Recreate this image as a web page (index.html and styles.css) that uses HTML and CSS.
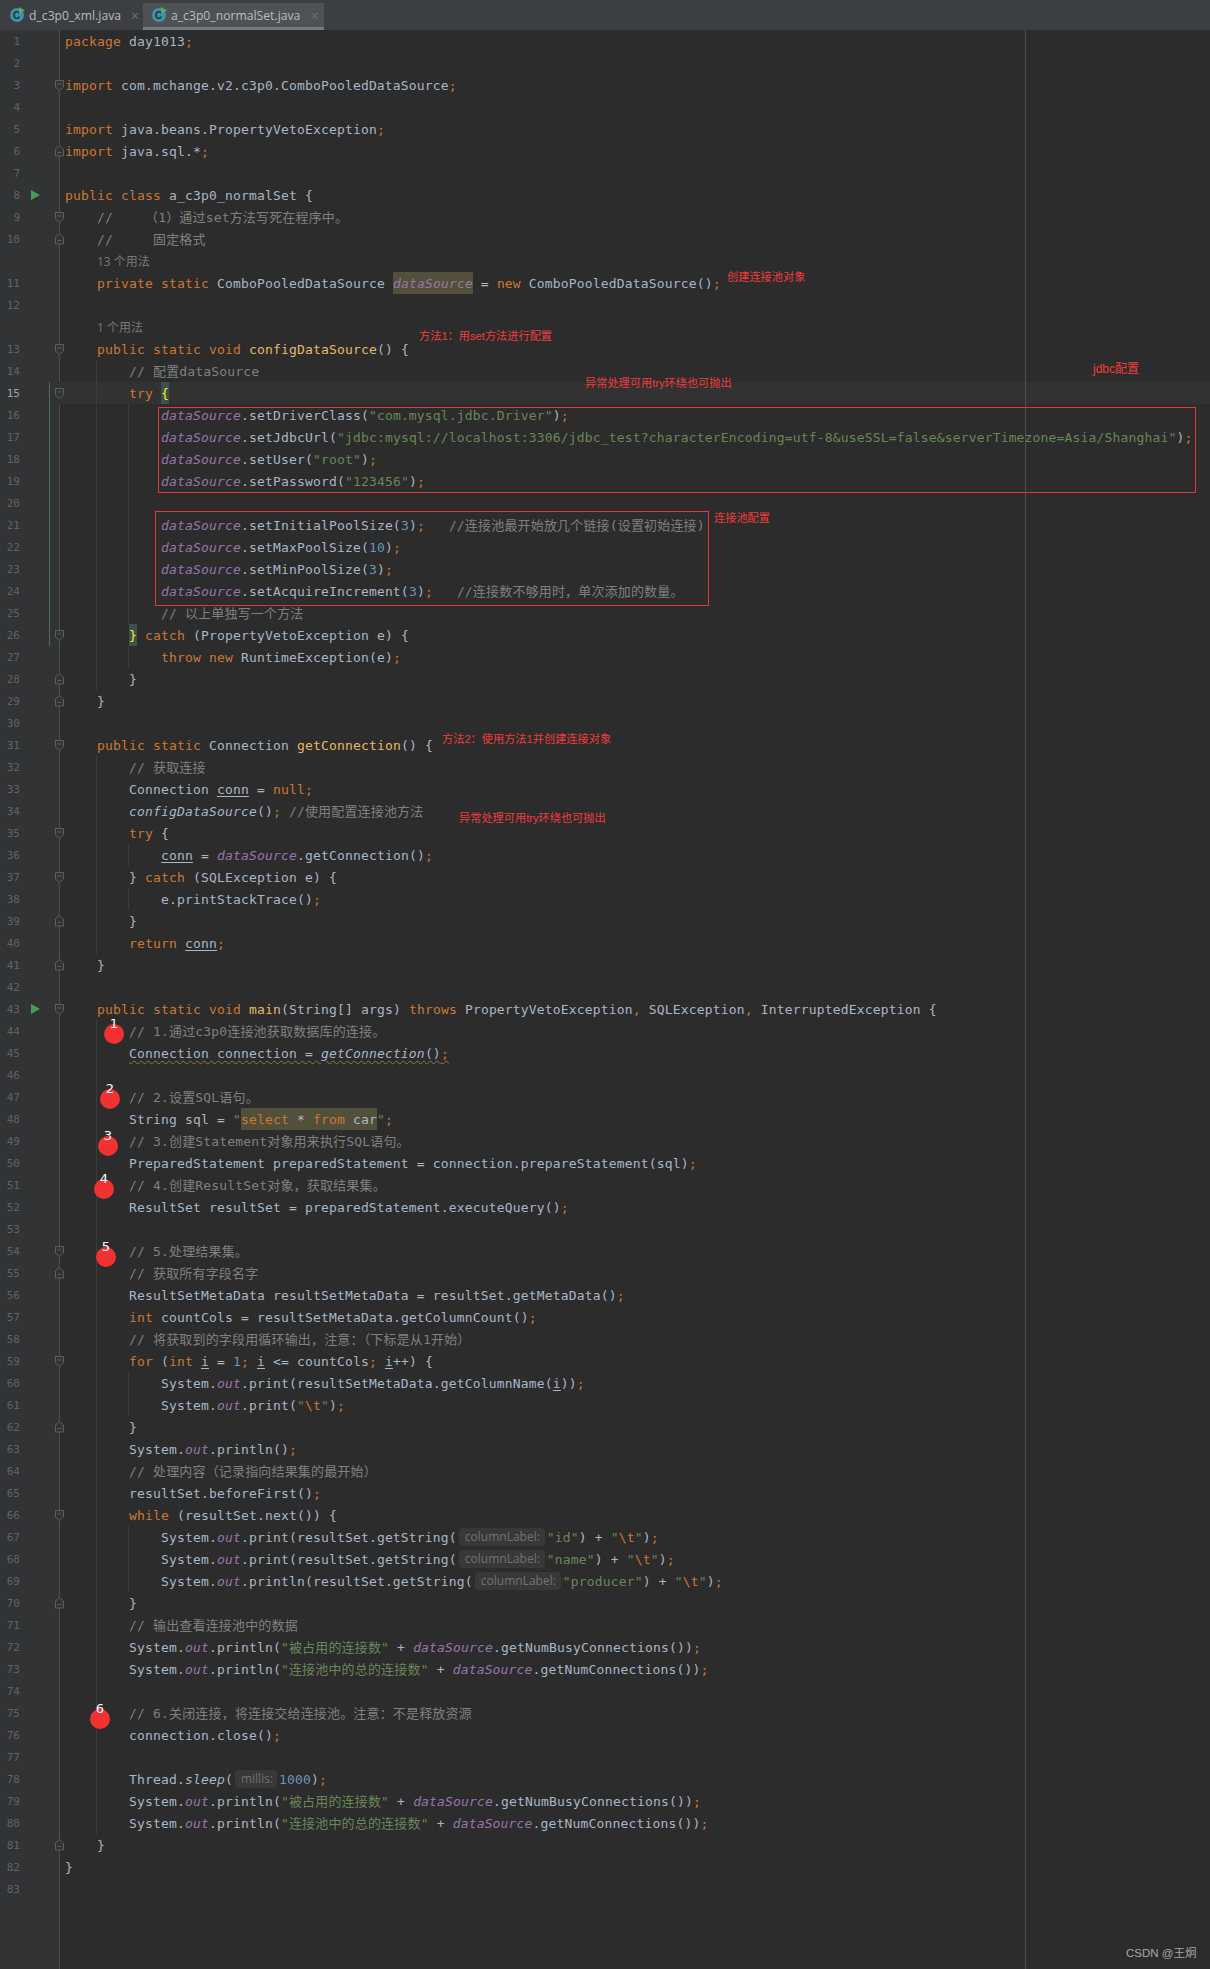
FILE: index.html
```html
<!DOCTYPE html>
<html lang="zh">
<head>
<meta charset="UTF-8" />
<title>a_c3p0_normalSet.java</title>
<link rel="stylesheet" href="styles.css">
</head>
<body>
<!-- 折叠标记 -->
<svg class="defs" width="0" height="0">
  <symbol id="fo" viewBox="0 0 10 12"><path d="M.5 1.5h8v6.5l-4 3.5-4-3.5zM2.5 5h4"/></symbol>
  <symbol id="fc" viewBox="0 0 10 12"><path d="M.5 11h8v-7l-4-3.5-4 3.5zM2.5 7.5h4"/></symbol>
</svg>

<!-- 标签栏 -->
<div class="tabs">
  <div class="tab">
    <svg class="ticon" width="16" height="16" viewBox="0 0 16 16"><circle cx="8" cy="8" r="7"/><text x="7.5" y="11.5">C</text><path class="tri" d="M10 0l6 3.5-6 3.5z"/></svg>
    <span>d_c3p0_xml.java</span><span class="x">×</span>
  </div>
  <div class="tab on">
    <svg class="ticon" width="16" height="16" viewBox="0 0 16 16"><circle cx="8" cy="8" r="7"/><text x="7.5" y="11.5">C</text><path class="tri" d="M10 0l6 3.5-6 3.5z"/></svg>
    <span>a_c3p0_normalSet.java</span><span class="x">×</span>
  </div>
</div>

<!-- 代码区 -->
<div class="editor">
  <div class="row"><div class="gut"><span class="num">1</span></div><pre class="code"><span class="k">package</span> day1013<span class="k">;</span></pre></div>
  <div class="row"><div class="gut"><span class="num">2</span></div><pre class="code"></pre></div>
  <div class="row"><div class="gut"><span class="num">3</span><svg class="fold"><use href="#fo"/></svg></div><pre class="code"><span class="k">import</span> com.mchange.v2.c3p0.ComboPooledDataSource<span class="k">;</span></pre></div>
  <div class="row"><div class="gut"><span class="num">4</span></div><pre class="code"></pre></div>
  <div class="row"><div class="gut"><span class="num">5</span></div><pre class="code"><span class="k">import</span> java.beans.PropertyVetoException<span class="k">;</span></pre></div>
  <div class="row"><div class="gut"><span class="num">6</span><svg class="fold"><use href="#fc"/></svg></div><pre class="code"><span class="k">import</span> java.sql.*<span class="k">;</span></pre></div>
  <div class="row"><div class="gut"><span class="num">7</span></div><pre class="code"></pre></div>
  <div class="row"><div class="gut"><span class="num">8</span><svg class="run" width="9" height="10" viewBox="0 0 9 10"><path d="M0 0l9 5-9 5z"/></svg></div><pre class="code"><span class="k">public class</span> a_c3p0_normalSet {</pre></div>
  <div class="row"><div class="gut"><span class="num">9</span><svg class="fold"><use href="#fo"/></svg></div><pre class="code"><span class="c">    //    （1）通过set方法写死在程序中。</span></pre></div>
  <div class="row"><div class="gut"><span class="num">10</span><svg class="fold"><use href="#fc"/></svg></div><pre class="code"><span class="c">    //     固定格式</span></pre></div>
  <div class="row"><div class="gut"></div><div class="code use">13 个用法</div></div>
  <div class="row"><div class="gut"><span class="num">11</span></div><pre class="code">    <span class="k">private static</span> ComboPooledDataSource <span class="f mark">dataSource</span> = <span class="k">new</span> ComboPooledDataSource()<span class="k">;</span></pre></div>
  <div class="row"><div class="gut"><span class="num">12</span></div><pre class="code"></pre></div>
  <div class="row"><div class="gut"></div><div class="code use">1 个用法</div></div>
  <div class="row"><div class="gut"><span class="num">13</span><svg class="fold"><use href="#fo"/></svg></div><pre class="code">    <span class="k">public static void</span> <span class="m">configDataSource</span>() {</pre></div>
  <div class="row g1"><div class="gut"><span class="num">14</span></div><pre class="code"><span class="c">        // 配置dataSource</span></pre></div>
  <div class="row g1 cur chg"><div class="gut"><span class="num">15</span><svg class="fold"><use href="#fo"/></svg></div><pre class="code">        <span class="k">try</span> <span class="brace">{</span></pre></div>
  <div class="row g2 chg"><div class="gut"><span class="num">16</span></div><pre class="code">            <span class="f">dataSource</span>.setDriverClass(<span class="s">"com.mysql.jdbc.Driver"</span>)<span class="k">;</span></pre></div>
  <div class="row g2 chg"><div class="gut"><span class="num">17</span></div><pre class="code">            <span class="f">dataSource</span>.setJdbcUrl(<span class="s">"jdbc:mysql://localhost:3306/jdbc_test?characterEncoding=utf-8&amp;useSSL=false&amp;serverTimezone=Asia/Shanghai"</span>)<span class="k">;</span></pre></div>
  <div class="row g2 chg"><div class="gut"><span class="num">18</span></div><pre class="code">            <span class="f">dataSource</span>.setUser(<span class="s">"root"</span>)<span class="k">;</span></pre></div>
  <div class="row g2 chg"><div class="gut"><span class="num">19</span></div><pre class="code">            <span class="f">dataSource</span>.setPassword(<span class="s">"123456"</span>)<span class="k">;</span></pre></div>
  <div class="row g2 chg"><div class="gut"><span class="num">20</span></div><pre class="code"></pre></div>
  <div class="row g2 chg"><div class="gut"><span class="num">21</span></div><pre class="code">            <span class="f">dataSource</span>.setInitialPoolSize(<span class="n">3</span>)<span class="k">;</span>   <span class="c">//连接池最开始放几个链接(设置初始连接)</span></pre></div>
  <div class="row g2 chg"><div class="gut"><span class="num">22</span></div><pre class="code">            <span class="f">dataSource</span>.setMaxPoolSize(<span class="n">10</span>)<span class="k">;</span></pre></div>
  <div class="row g2 chg"><div class="gut"><span class="num">23</span></div><pre class="code">            <span class="f">dataSource</span>.setMinPoolSize(<span class="n">3</span>)<span class="k">;</span></pre></div>
  <div class="row g2 chg"><div class="gut"><span class="num">24</span></div><pre class="code">            <span class="f">dataSource</span>.setAcquireIncrement(<span class="n">3</span>)<span class="k">;</span>   <span class="c">//连接数不够用时，单次添加的数量。</span></pre></div>
  <div class="row g2 chg"><div class="gut"><span class="num">25</span></div><pre class="code"><span class="c">            // 以上单独写一个方法</span></pre></div>
  <div class="row g1 chg"><div class="gut"><span class="num">26</span><svg class="fold"><use href="#fo"/></svg></div><pre class="code">        <span class="brace">}</span> <span class="k">catch</span> (PropertyVetoException e) {</pre></div>
  <div class="row g2"><div class="gut"><span class="num">27</span></div><pre class="code">            <span class="k">throw new</span> RuntimeException(e)<span class="k">;</span></pre></div>
  <div class="row g1"><div class="gut"><span class="num">28</span><svg class="fold"><use href="#fc"/></svg></div><pre class="code">        }</pre></div>
  <div class="row"><div class="gut"><span class="num">29</span><svg class="fold"><use href="#fc"/></svg></div><pre class="code">    }</pre></div>
  <div class="row"><div class="gut"><span class="num">30</span></div><pre class="code"></pre></div>
  <div class="row"><div class="gut"><span class="num">31</span><svg class="fold"><use href="#fo"/></svg></div><pre class="code">    <span class="k">public static</span> Connection <span class="m">getConnection</span>() {</pre></div>
  <div class="row g1"><div class="gut"><span class="num">32</span></div><pre class="code"><span class="c">        // 获取连接</span></pre></div>
  <div class="row g1"><div class="gut"><span class="num">33</span></div><pre class="code">        Connection <span class="u">conn</span> = <span class="k">null;</span></pre></div>
  <div class="row g1"><div class="gut"><span class="num">34</span></div><pre class="code">        <span class="i">configDataSource</span>()<span class="k">;</span> <span class="c">//使用配置连接池方法</span></pre></div>
  <div class="row g1"><div class="gut"><span class="num">35</span><svg class="fold"><use href="#fo"/></svg></div><pre class="code">        <span class="k">try</span> {</pre></div>
  <div class="row g2"><div class="gut"><span class="num">36</span></div><pre class="code">            <span class="u">conn</span> = <span class="f">dataSource</span>.getConnection()<span class="k">;</span></pre></div>
  <div class="row g1"><div class="gut"><span class="num">37</span><svg class="fold"><use href="#fo"/></svg></div><pre class="code">        } <span class="k">catch</span> (SQLException e) {</pre></div>
  <div class="row g2"><div class="gut"><span class="num">38</span></div><pre class="code">            e.printStackTrace()<span class="k">;</span></pre></div>
  <div class="row g1"><div class="gut"><span class="num">39</span><svg class="fold"><use href="#fc"/></svg></div><pre class="code">        }</pre></div>
  <div class="row g1"><div class="gut"><span class="num">40</span></div><pre class="code">        <span class="k">return</span> <span class="u">conn</span><span class="k">;</span></pre></div>
  <div class="row"><div class="gut"><span class="num">41</span><svg class="fold"><use href="#fc"/></svg></div><pre class="code">    }</pre></div>
  <div class="row"><div class="gut"><span class="num">42</span></div><pre class="code"></pre></div>
  <div class="row"><div class="gut"><span class="num">43</span><svg class="run" width="9" height="10" viewBox="0 0 9 10"><path d="M0 0l9 5-9 5z"/></svg><svg class="fold"><use href="#fo"/></svg></div><pre class="code">    <span class="k">public static void</span> <span class="m">main</span>(String[] args) <span class="k">throws</span> PropertyVetoException<span class="k">,</span> SQLException<span class="k">,</span> InterruptedException {</pre></div>
  <div class="row g1"><div class="gut"><span class="num">44</span></div><pre class="code"><span class="c">        // 1.通过c3p0连接池获取数据库的连接。</span></pre></div>
  <div class="row g1"><div class="gut"><span class="num">45</span></div><pre class="code">        <span class="warn">Connection connection = <span class="i">getConnection</span>()<span class="k">;</span></span></pre></div>
  <div class="row g1"><div class="gut"><span class="num">46</span></div><pre class="code"></pre></div>
  <div class="row g1"><div class="gut"><span class="num">47</span></div><pre class="code"><span class="c">        // 2.设置SQL语句。</span></pre></div>
  <div class="row g1"><div class="gut"><span class="num">48</span></div><pre class="code">        String sql = <span class="s">"</span><span class="mark"><span class="k">select</span> * <span class="k">from</span> car</span><span class="s">"</span><span class="k">;</span></pre></div>
  <div class="row g1"><div class="gut"><span class="num">49</span></div><pre class="code"><span class="c">        // 3.创建Statement对象用来执行SQL语句。</span></pre></div>
  <div class="row g1"><div class="gut"><span class="num">50</span></div><pre class="code">        PreparedStatement preparedStatement = connection.prepareStatement(sql)<span class="k">;</span></pre></div>
  <div class="row g1"><div class="gut"><span class="num">51</span></div><pre class="code"><span class="c">        // 4.创建ResultSet对象，获取结果集。</span></pre></div>
  <div class="row g1"><div class="gut"><span class="num">52</span></div><pre class="code">        ResultSet resultSet = preparedStatement.executeQuery()<span class="k">;</span></pre></div>
  <div class="row g1"><div class="gut"><span class="num">53</span></div><pre class="code"></pre></div>
  <div class="row g1"><div class="gut"><span class="num">54</span><svg class="fold"><use href="#fo"/></svg></div><pre class="code"><span class="c">        // 5.处理结果集。</span></pre></div>
  <div class="row g1"><div class="gut"><span class="num">55</span><svg class="fold"><use href="#fc"/></svg></div><pre class="code"><span class="c">        // 获取所有字段名字</span></pre></div>
  <div class="row g1"><div class="gut"><span class="num">56</span></div><pre class="code">        ResultSetMetaData resultSetMetaData = resultSet.getMetaData()<span class="k">;</span></pre></div>
  <div class="row g1"><div class="gut"><span class="num">57</span></div><pre class="code">        <span class="k">int</span> countCols = resultSetMetaData.getColumnCount()<span class="k">;</span></pre></div>
  <div class="row g1"><div class="gut"><span class="num">58</span></div><pre class="code"><span class="c">        // 将获取到的字段用循环输出，注意：（下标是从1开始）</span></pre></div>
  <div class="row g1"><div class="gut"><span class="num">59</span><svg class="fold"><use href="#fo"/></svg></div><pre class="code">        <span class="k">for</span> (<span class="k">int</span> <span class="u">i</span> = <span class="n">1</span><span class="k">;</span> <span class="u">i</span> &lt;= countCols<span class="k">;</span> <span class="u">i</span>++) {</pre></div>
  <div class="row g2"><div class="gut"><span class="num">60</span></div><pre class="code">            System.<span class="f">out</span>.print(resultSetMetaData.getColumnName(<span class="u">i</span>))<span class="k">;</span></pre></div>
  <div class="row g2"><div class="gut"><span class="num">61</span></div><pre class="code">            System.<span class="f">out</span>.print(<span class="s">"<span class="k">\t</span>"</span>)<span class="k">;</span></pre></div>
  <div class="row g1"><div class="gut"><span class="num">62</span><svg class="fold"><use href="#fc"/></svg></div><pre class="code">        }</pre></div>
  <div class="row g1"><div class="gut"><span class="num">63</span></div><pre class="code">        System.<span class="f">out</span>.println()<span class="k">;</span></pre></div>
  <div class="row g1"><div class="gut"><span class="num">64</span></div><pre class="code"><span class="c">        // 处理内容（记录指向结果集的最开始）</span></pre></div>
  <div class="row g1"><div class="gut"><span class="num">65</span></div><pre class="code">        resultSet.beforeFirst()<span class="k">;</span></pre></div>
  <div class="row g1"><div class="gut"><span class="num">66</span><svg class="fold"><use href="#fo"/></svg></div><pre class="code">        <span class="k">while</span> (resultSet.next()) {</pre></div>
  <div class="row g2"><div class="gut"><span class="num">67</span></div><pre class="code">            System.<span class="f">out</span>.print(resultSet.getString(<span class="hint">columnLabel:</span><span class="s">"id"</span>) + <span class="s">"<span class="k">\t</span>"</span>)<span class="k">;</span></pre></div>
  <div class="row g2"><div class="gut"><span class="num">68</span></div><pre class="code">            System.<span class="f">out</span>.print(resultSet.getString(<span class="hint">columnLabel:</span><span class="s">"name"</span>) + <span class="s">"<span class="k">\t</span>"</span>)<span class="k">;</span></pre></div>
  <div class="row g2"><div class="gut"><span class="num">69</span></div><pre class="code">            System.<span class="f">out</span>.println(resultSet.getString(<span class="hint">columnLabel:</span><span class="s">"producer"</span>) + <span class="s">"<span class="k">\t</span>"</span>)<span class="k">;</span></pre></div>
  <div class="row g1"><div class="gut"><span class="num">70</span><svg class="fold"><use href="#fc"/></svg></div><pre class="code">        }</pre></div>
  <div class="row g1"><div class="gut"><span class="num">71</span></div><pre class="code"><span class="c">        // 输出查看连接池中的数据</span></pre></div>
  <div class="row g1"><div class="gut"><span class="num">72</span></div><pre class="code">        System.<span class="f">out</span>.println(<span class="s">"被占用的连接数"</span> + <span class="f">dataSource</span>.getNumBusyConnections())<span class="k">;</span></pre></div>
  <div class="row g1"><div class="gut"><span class="num">73</span></div><pre class="code">        System.<span class="f">out</span>.println(<span class="s">"连接池中的总的连接数"</span> + <span class="f">dataSource</span>.getNumConnections())<span class="k">;</span></pre></div>
  <div class="row g1"><div class="gut"><span class="num">74</span></div><pre class="code"></pre></div>
  <div class="row g1"><div class="gut"><span class="num">75</span></div><pre class="code"><span class="c">        // 6.关闭连接，将连接交给连接池。注意：不是释放资源</span></pre></div>
  <div class="row g1"><div class="gut"><span class="num">76</span></div><pre class="code">        connection.close()<span class="k">;</span></pre></div>
  <div class="row g1"><div class="gut"><span class="num">77</span></div><pre class="code"></pre></div>
  <div class="row g1"><div class="gut"><span class="num">78</span></div><pre class="code">        Thread.<span class="i">sleep</span>(<span class="hint short">millis:</span><span class="n">1000</span>)<span class="k">;</span></pre></div>
  <div class="row g1"><div class="gut"><span class="num">79</span></div><pre class="code">        System.<span class="f">out</span>.println(<span class="s">"被占用的连接数"</span> + <span class="f">dataSource</span>.getNumBusyConnections())<span class="k">;</span></pre></div>
  <div class="row g1"><div class="gut"><span class="num">80</span></div><pre class="code">        System.<span class="f">out</span>.println(<span class="s">"连接池中的总的连接数"</span> + <span class="f">dataSource</span>.getNumConnections())<span class="k">;</span></pre></div>
  <div class="row"><div class="gut"><span class="num">81</span><svg class="fold"><use href="#fc"/></svg></div><pre class="code">    }</pre></div>
  <div class="row"><div class="gut"><span class="num">82</span></div><pre class="code">}</pre></div>
  <div class="row"><div class="gut"><span class="num">83</span></div><pre class="code"></pre></div>

  <!-- 右边界线 -->
  <div class="margin-line"></div>
</div>

<!-- 截图上的标注 -->
<div class="box box-jdbc"></div>
<div class="box box-pool"></div>

<div class="note n-create">创建连接池对象</div>
<div class="note n-way1">方法1：用set方法进行配置</div>
<div class="note n-jdbc">jdbc配置</div>
<div class="note n-try1">异常处理可用try环绕也可抛出</div>
<div class="note n-pool">连接池配置</div>
<div class="note n-way2">方法2：使用方法1并创建连接对象</div>
<div class="note n-try2">异常处理可用try环绕也可抛出</div>

<div class="dot d1"><span>1</span></div>
<div class="dot d2"><span>2</span></div>
<div class="dot d3"><span>3</span></div>
<div class="dot d4"><span>4</span></div>
<div class="dot d5"><span>5</span></div>
<div class="dot d6"><span>6</span></div>

<div class="wm">CSDN @王炯</div>
</body>
</html>
```

FILE: styles.css
```css
* {
  box-sizing: border-box;
}
body {
  margin: 0;
  position: relative;
  min-height: 1969px;
  background: #2c2c2c;
  overflow: hidden;
}
.defs {
  position: absolute;
}

/* 标签栏 */
.tabs {
  display: flex;
  height: 30px;
  padding-top: 3px;
  background: #3c3f41;
  font: 12.2px "Open Sans", "Noto Sans", sans-serif;
  color: #bbbbbb;
}
.tab {
  display: flex;
  align-items: center;
  gap: 4px;
  width: 143px;
  padding: 0 0 3px 9px;
}
.tab.on {
  width: 181px;
  background: #4e5254;
  border-bottom: 3px solid #747a80;
  padding: 0 0 0 8px;
}
.x {
  margin-left: 6px;
  font-size: 14px;
  color: #6e6e6e;
}
.ticon circle {
  fill: #3f8fae;
}
.ticon text {
  font: bold 10px "Liberation Sans", sans-serif;
  text-anchor: middle;
  fill: #2b2b2b;
}
.ticon .tri {
  fill: #59a869;
}

/* 编辑区背景: 行号栏 + 分隔线 */
.editor {
  position: relative;
  height: 1939px;
  background:
    linear-gradient(#4b4d4e, #4b4d4e) 59px 0 / 1px 100% no-repeat,
    linear-gradient(#313335, #313335) 0 0 / 59px 100% no-repeat,
    #2c2c2c;
}
.row {
  display: flex;
  height: 22px;
}
.gut {
  display: flex;
  align-items: center;
  flex: none;
  width: 59px;
  font: 11px "DejaVu Sans Mono", monospace;
  color: #606366;
}
.num {
  width: 20px;
  text-align: right;
}
.run {
  margin-left: 11px;
  fill: #499c54;
}
.fold {
  width: 10px;
  height: 12px;
  margin-left: auto;
  margin-right: -6px;
  position: relative;
  z-index: 1;
  fill: #313335;
  stroke: #5c5e60;
  stroke-width: 1;
}
.code {
  flex: 1;
  min-width: 0;
  height: 22px;
  margin: 0;
  padding-left: 6px;
  font: 13px/24px "DejaVu Sans Mono", "Noto Sans CJK SC", monospace;
  letter-spacing: 0.17px;
  color: #a9b7c6;
  white-space: pre;
}

/* 缩进线 */
.g1 .code {
  background: linear-gradient(#3b3b3b, #3b3b3b) 37px 0 / 1px 100% no-repeat;
}
.g2 .code {
  background:
    linear-gradient(#3b3b3b, #3b3b3b) 37px 0 / 1px 100% no-repeat,
    linear-gradient(#3b3b3b, #3b3b3b) 69px 0 / 1px 100% no-repeat;
}
.row.cur .code {
  background:
    linear-gradient(#3b3b3b, #3b3b3b) 37px 0 / 1px 100% no-repeat,
    #323232;
}
.cur .num {
  color: #a4a3a3;
}
.chg .gut {
  background: linear-gradient(#4c6b5e, #4c6b5e) 49px 0 / 1px 100% no-repeat;
}

/* 语法颜色 */
.k {
  color: #cc7832;
}
.s {
  color: #6a8759;
}
.c {
  color: #808080;
}
.f {
  color: #9876aa;
  font-style: italic;
}
.m {
  color: #e8b868;
}
.n {
  color: #6897bb;
}
.i {
  font-style: italic;
}
.u {
  text-decoration: underline;
  text-underline-offset: 2px;
}
.warn {
  text-decoration: underline wavy #8f7d3a 1px;
  text-underline-offset: 2px;
}
.mark {
  display: inline-block;
  height: 22px;
  background: #52503a;
}
.brace {
  display: inline-block;
  height: 22px;
  background: #3b514d;
  color: #ffef28;
}
.use {
  font: 12px/24px "Open Sans", "Noto Sans CJK SC", sans-serif;
  letter-spacing: 0;
  padding-left: 38px;
  color: #787878;
}
.hint {
  display: inline-block;
  width: 86px;
  height: 18px;
  margin: 0 2px;
  padding-left: 6px;
  border-radius: 4px;
  background: #383838;
  font: 12px/18px "Open Sans", sans-serif;
  letter-spacing: 0;
  color: #727272;
  vertical-align: 1px;
}
.hint.short {
  width: 42px;
}
.margin-line {
  position: absolute;
  top: 0;
  bottom: 0;
  left: 1025px;
  width: 1px;
  background: #4f4f4f;
}

/* 红框 */
.box {
  position: absolute;
  border: 1.5px solid #e23a3a;
}
.box-jdbc {
  left: 158px;
  top: 407px;
  width: 1038px;
  height: 86px;
}
.box-pool {
  left: 155px;
  top: 511px;
  width: 554px;
  height: 95px;
}

/* 红字 */
.note {
  position: absolute;
  font: 11.2px/14px "Liberation Sans", "Noto Sans CJK SC", sans-serif;
  color: #f03c3c;
  white-space: nowrap;
}
.n-create { left: 727px; top: 270px; }
.n-way1 { left: 419px; top: 329px; }
.n-jdbc { left: 1093px; top: 362px; font-size: 12px; }
.n-try1 { left: 585px; top: 376px; }
.n-pool { left: 714px; top: 511px; }
.n-way2 { left: 442px; top: 732px; }
.n-try2 { left: 459px; top: 811px; }

/* 红点 */
.dot {
  position: absolute;
  width: 20px;
  height: 20px;
  border-radius: 50%;
  background: #f23232;
  text-align: center;
  font: 13px/14px "DejaVu Sans", sans-serif;
  color: #ffffff;
}
.dot span {
  display: block;
  margin-top: -7px;
}
.d1 { left: 104px; top: 1024px; }
.d2 { left: 100px; top: 1089px; }
.d3 { left: 98px; top: 1136px; }
.d4 { left: 94px; top: 1179px; }
.d5 { left: 96px; top: 1247px; }
.d6 { left: 90px; top: 1709px; }

.wm {
  position: absolute;
  left: 1126px;
  top: 1946px;
  font: 11.5px/14px "Liberation Sans", "Noto Sans CJK SC", sans-serif;
  color: #a8a8a8;
}
```
